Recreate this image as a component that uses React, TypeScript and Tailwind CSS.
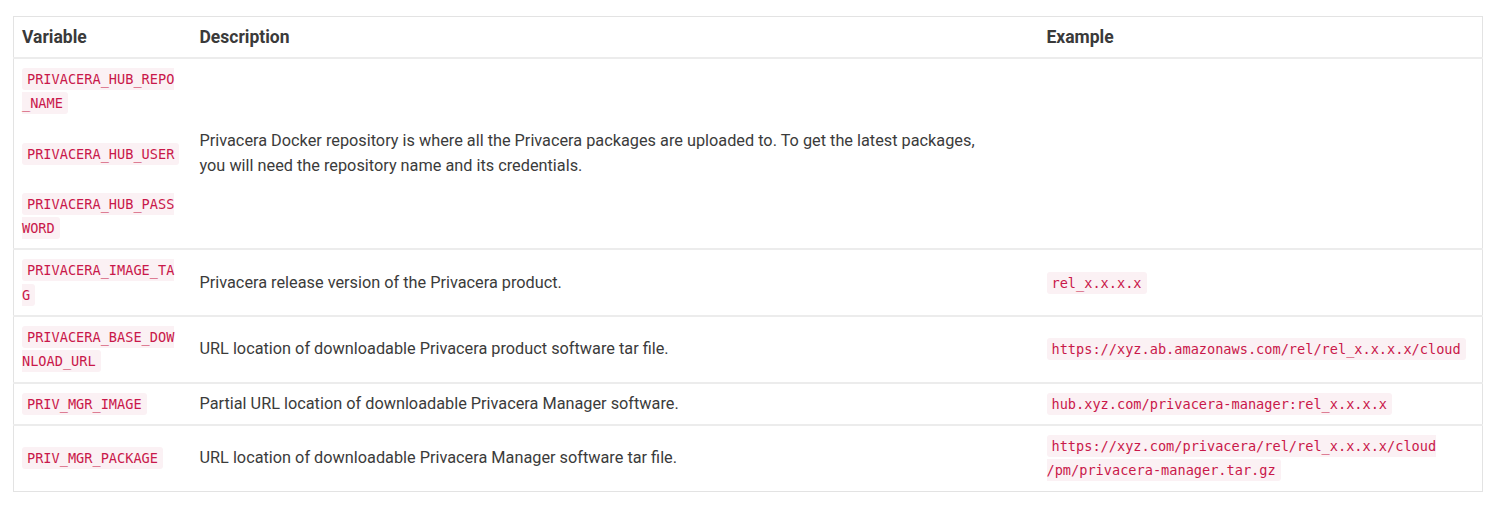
const rows: { vars: string[][]; desc: string; example?: string[] }[] = [
  {
    vars: [['PRIVACERA_HUB_REPO_NAME'], ['PRIVACERA_HUB_USER'], ['PRIVACERA_HUB_PASSWORD']],
    desc: 'Privacera Docker repository is where all the Privacera packages are uploaded to. To get the latest packages, you will need the repository name and its credentials.',
  },
  {
    vars: [['PRIVACERA_IMAGE_TAG']],
    desc: 'Privacera release version of the Privacera product.',
    example: ['rel_x.x.x.x'],
  },
  {
    vars: [['PRIVACERA_BASE_DOWNLOAD_URL']],
    desc: 'URL location of downloadable Privacera product software tar file.',
    example: ['https://xyz.ab.amazonaws.com/rel/rel_x.x.x.x/cloud'],
  },
  {
    vars: [['PRIV_MGR_IMAGE']],
    desc: 'Partial URL location of downloadable Privacera Manager software.',
    example: ['hub.xyz.com/privacera-manager:rel_x.x.x.x'],
  },
  {
    vars: [['PRIV_MGR_PACKAGE']],
    desc: 'URL location of downloadable Privacera Manager software tar file.',
    example: ['https://xyz.com/privacera/rel/rel_x.x.x.x/cloud', '/pm/privacera-manager.tar.gz'],
  },
]

function Code({ parts }: { parts: string[] }) {
  return (
    <code className="rounded-[3px] bg-[#fbf1f4] px-[5px] py-[3px] font-['DejaVu_Sans_Mono',monospace] text-[13.6px] text-[#c9184a] [overflow-wrap:anywhere]">
      {parts.map((p, i) => (
        <span key={i}>
          {i > 0 && <wbr />}
          {p}
        </span>
      ))}
    </code>
  )
}

export default function App() {
  return (
    <div className="bg-white pl-[13px] pr-[17px] pt-[16px] pb-[18px] font-['Roboto',sans-serif] text-[16.3px] leading-[24.3px] text-[#3b3b3b]">
      <table className="w-full table-fixed border-collapse border border-[#e3e3e3]">
        <colgroup>
          <col className="w-[177px]" />
          <col className="w-[847px]" />
          <col />
        </colgroup>
        <thead>
          <tr className="border-b-2 border-[#ececec]">
            <th className="py-[8px] pl-[8px] text-left text-[17.5px] leading-[24px] font-bold text-[#3a3a3a]">Variable</th>
            <th className="py-[8px] pl-[9px] text-left text-[17.5px] leading-[24px] font-bold text-[#3a3a3a]">Description</th>
            <th className="py-[8px] pl-[9px] text-left text-[17.5px] leading-[24px] font-bold text-[#3a3a3a]">Example</th>
          </tr>
        </thead>
        <tbody>
          {rows.map((r, i) => (
            <tr key={i} className="border-t-2 border-[#ececec] first:border-t-0">
              <td className="py-[8px] pl-[8px] pr-[10px] align-middle">
                <div className="flex flex-col gap-[26px]">
                  {r.vars.map((v, j) => (
                    <div key={j}>
                      <Code parts={v} />
                    </div>
                  ))}
                </div>
              </td>
              <td className="py-[8px] pl-[9px] pr-[40px] align-middle">{r.desc}</td>
              <td className="py-[8px] pl-[9px] pr-[8px] align-middle">
                {r.example && <Code parts={r.example} />}
              </td>
            </tr>
          ))}
        </tbody>
      </table>
    </div>
  )
}
